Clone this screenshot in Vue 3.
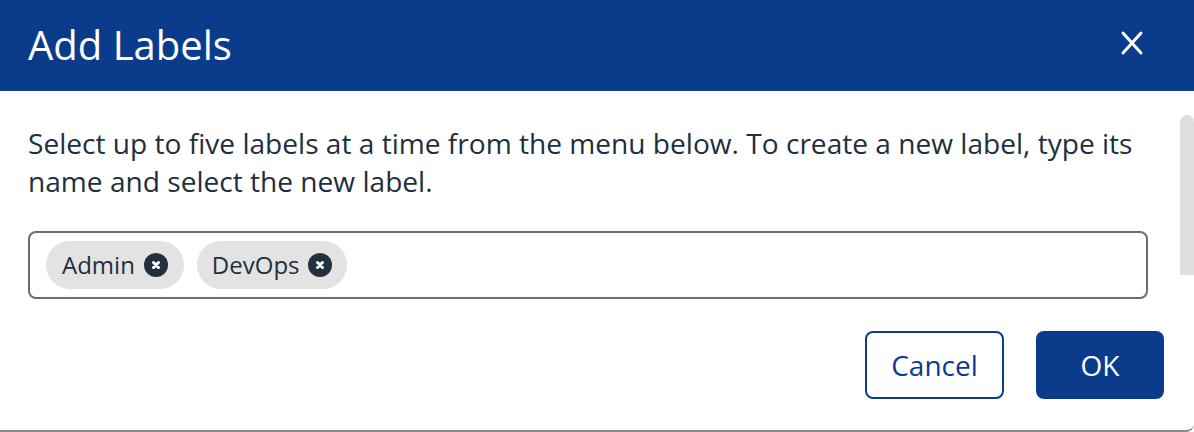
<template>
  <div class="dialog">
    <header class="dialog-header">
      <h1 class="title">Add Labels</h1>
      <button class="close-btn" aria-label="Close">
        <svg width="24" height="26" viewBox="0 0 24 26">
          <path d="M3 3 L21 23 M21 3 L3 23" stroke="#fff" stroke-width="3" stroke-linecap="round" fill="none" />
        </svg>
      </button>
    </header>
    <div class="dialog-body">
      <div class="content">
        <p class="intro">
          Select up to five labels at a time from the menu below. To create a new label, type its name and select the new label.
        </p>
        <div class="label-input">
          <span v-for="label in labels" :key="label" class="chip">
            <span class="chip-text">{{ label }}</span>
            <svg class="chip-x" width="24" height="24" viewBox="0 0 24 24">
              <circle cx="12" cy="12" r="12" fill="#212f3e" />
              <path d="M9.5 9.5 L14.5 14.5 M14.5 9.5 L9.5 14.5" stroke="#fff" stroke-width="3" stroke-linecap="round" />
            </svg>
          </span>
        </div>
      </div>
      <div class="scrollbar"><div class="thumb"></div></div>
    </div>
    <footer class="actions">
      <button class="btn btn-outline">Cancel</button>
      <button class="btn btn-primary">OK</button>
    </footer>
  </div>
</template>

<script setup>
const labels = ['Admin', 'DevOps'];
</script>

<style scoped>
.dialog {
  width: 1194px;
  height: 432px;
  box-sizing: border-box;
  display: flex;
  flex-direction: column;
  background: #fff;
  border-bottom: 2px solid #8a8a8a;
  border-bottom-right-radius: 8px;
  font-family: "Open Sans", sans-serif;
  color: #212f3e;
}

.dialog-header {
  height: 91px;
  flex-shrink: 0;
  display: flex;
  align-items: center;
  justify-content: space-between;
  padding: 0 50px 0 28px;
  background: #0b3c8b;
}

.title {
  margin: 0 0 3px;
  font-size: 40px;
  font-weight: 400;
  color: #fff;
}

.close-btn {
  display: flex;
  margin-bottom: 5px;
  padding: 0;
  border: none;
  background: none;
}

.dialog-body {
  height: 240px;
  flex-shrink: 0;
  display: flex;
  overflow: hidden;
}

.content {
  width: 1120px;
  padding: 33px 0 0 28px;
}

.intro {
  margin: 0 0 31px;
  font-size: 28.1px;
  line-height: 38px;
}

.label-input {
  height: 68px;
  box-sizing: border-box;
  display: flex;
  align-items: center;
  gap: 13px;
  padding: 0 16px;
  border: 2px solid #6e6e6e;
  border-radius: 8px;
}

.chip {
  height: 48px;
  display: flex;
  align-items: center;
  gap: 9px;
  padding: 0 16px;
  border-radius: 24px;
  background: #e3e3e3;
  font-size: 24px;
}

.chip + .chip {
  gap: 8px;
  padding: 0 15px;
}

.chip-text {
  margin-bottom: 2px;
}

.scrollbar {
  margin: 24px 0 0 32px;
}

.thumb {
  width: 14px;
  height: 160px;
  border-radius: 7px 7px 0 0;
  background: #dedede;
}

.actions {
  display: flex;
  justify-content: flex-end;
  gap: 32px;
  padding: 0 30px 0 0;
}

.btn {
  height: 68px;
  box-sizing: border-box;
  border-radius: 8px;
  font-family: inherit;
  font-size: 28px;
}

.btn-outline {
  width: 139px;
  border: 2px solid #0b3c8b;
  background: #fff;
  color: #0b3c8b;
}

.btn-primary {
  width: 128px;
  border: none;
  background: #0b3c8b;
  color: #fff;
}
</style>
